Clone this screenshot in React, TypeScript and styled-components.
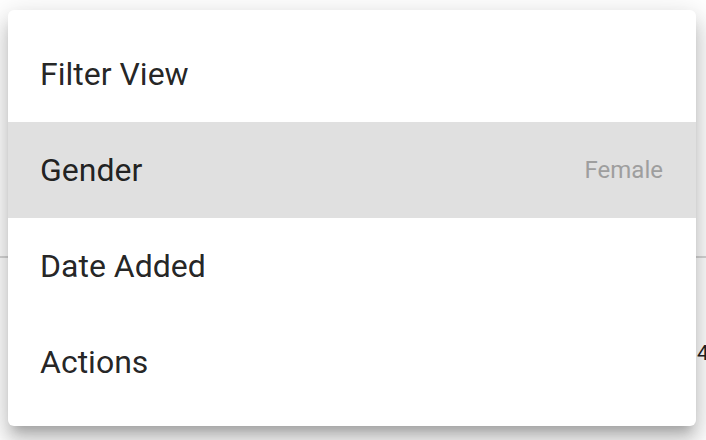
import React from "react";
import styled, { createGlobalStyle } from "styled-components";

const Global = createGlobalStyle`
  html, body { margin: 0; padding: 0; background: #ffffff; }
  body { font-family: Roboto, "Noto Sans", Arial, sans-serif; overflow: hidden; }
`;

const Page = styled.div`
  position: relative;
  width: 706px;
  height: 440px;
  overflow: hidden;
  background: #ffffff;
`;

const Table = styled.div`
  display: flex;
  flex-direction: column;
  padding-top: 162px;
`;

const TableRow = styled.div<{ $border?: boolean; $tall?: boolean }>`
  height: ${(p) => (p.$tall ? "190px" : "96px")};
  display: flex;
  align-items: center;
  justify-content: flex-end;
  border-bottom: ${(p) => (p.$border ? "2px solid #d6d6d6" : "none")};
  box-sizing: border-box;
`;

const Cell = styled.div`
  font-size: 21px;
  color: #212121;
  width: 9px;
  white-space: nowrap;
`;

const Menu = styled.ul`
  position: absolute;
  left: 8px;
  top: 10px;
  width: 688px;
  margin: 0;
  padding: 16px 0;
  list-style: none;
  background: #ffffff;
  border-radius: 6px;
  box-sizing: border-box;
  box-shadow: 0 10px 10px -6px rgba(0, 0, 0, 0.2),
    0 16px 20px 2px rgba(0, 0, 0, 0.14), 0 6px 28px 4px rgba(0, 0, 0, 0.12);
`;

const Item = styled.li<{ $selected?: boolean }>`
  height: 96px;
  display: flex;
  align-items: center;
  justify-content: space-between;
  padding: 0 33px 0 32px;
  background: ${(p) => (p.$selected ? "#e0e0e0" : "transparent")};
  font-size: 32px;
  color: rgba(0, 0, 0, 0.87);
`;

const Secondary = styled.span`
  font-size: 24px;
  color: #9e9e9e;
`;

const items: { label: string; value?: string; selected?: boolean }[] = [
  { label: "Filter View" },
  { label: "Gender", value: "Female", selected: true },
  { label: "Date Added" },
  { label: "Actions" },
];

export default function App() {
  return (
    <>
      <Global />
      <Page>
        <Table>
          <TableRow $border />
          <TableRow $tall>
            <Cell>4</Cell>
          </TableRow>
        </Table>
        <Menu>
          {items.map((it) => (
            <Item key={it.label} $selected={it.selected}>
              <span>{it.label}</span>
              {it.value && <Secondary>{it.value}</Secondary>}
            </Item>
          ))}
        </Menu>
      </Page>
    </>
  );
}
